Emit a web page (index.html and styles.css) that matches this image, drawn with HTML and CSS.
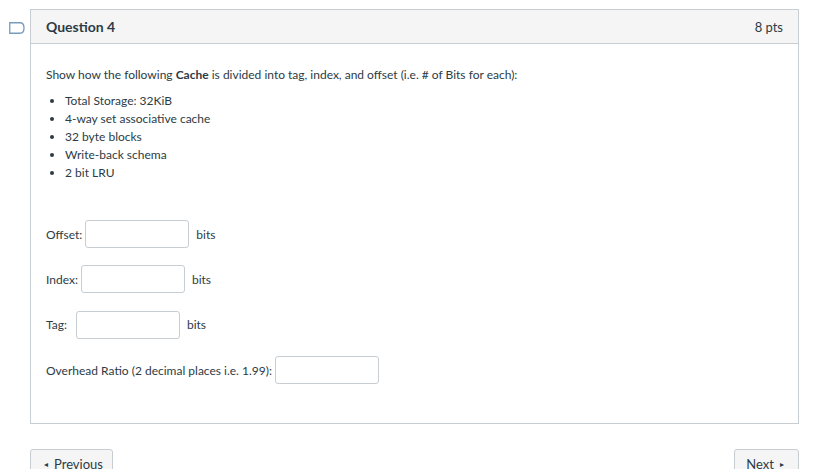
FILE: index.html
```html
<!DOCTYPE html>
<html>
<head>
<meta charset="utf-8">
<link rel="stylesheet" href="styles.css">
</head>
<body>
<div class="page">
  <div class="flag-col">
    <svg class="flag" width="16" height="12" viewBox="0 0 16 12"><path d="M0.75 0.75 H11 Q15 0.75 15 6 Q15 11.25 11 11.25 H0.75 Z" fill="none" stroke="#7a9bbd" stroke-width="1.3"/></svg>
  </div>
  <div class="main">
    <div class="card">
      <div class="card-head">
        <span class="q-title">Question 4</span>
        <span class="q-pts">8 pts</span>
      </div>
      <div class="card-body">
        <p class="intro">Show how the following <strong>Cache</strong> is divided into tag, index, and offset (i.e. # of Bits for each):</p>
        <ul class="specs">
          <li>Total Storage: 32KiB</li>
          <li>4-way set associative cache</li>
          <li>32 byte blocks</li>
          <li>Write-back schema</li>
          <li>2 bit LRU</li>
        </ul>
        <div class="field-row"><span>Offset:</span><input class="ans" type="text"><span class="unit">bits</span></div>
        <div class="field-row"><span>Index:</span><input class="ans" type="text"><span class="unit">bits</span></div>
        <div class="field-row"><span class="tag-label">Tag:</span><input class="ans" type="text"><span class="unit">bits</span></div>
        <div class="field-row"><span>Overhead Ratio (2 decimal places i.e. 1.99):</span><input class="ans" type="text"></div>
      </div>
    </div>
    <div class="nav">
      <button class="nav-btn prev"><span class="arrow">&#9666;</span>Previous</button>
      <button class="nav-btn next">Next<span class="arrow">&#9656;</span></button>
    </div>
  </div>
</div>
</body>
</html>
```
FILE: styles.css
```css
html, body {
  margin: 0;
  padding: 0;
  background: #ffffff;
}
body {
  font-family: Lato, "Liberation Sans", sans-serif;
  font-size: 12px;
  color: #2d3b45;
  overflow: hidden;
}
.page {
  display: flex;
  padding: 9px 0 0 9px;
}
.flag-col {
  width: 21px;
  padding-top: 13px;
}
.flag {
  display: block;
}
.main {
  width: 769px;
}
.card {
  border: 1px solid #c7cdd1;
  height: 415px;
  box-sizing: border-box;
}
.card-head {
  height: 33px;
  background: #f5f5f5;
  border-bottom: 1px solid #c7cdd1;
  display: flex;
  align-items: center;
  justify-content: space-between;
  padding: 0 15px;
}
.q-title {
  font-weight: 700;
  font-size: 14px;
  color: #2d3b45;
}
.q-pts {
  font-size: 13px;
}
.card-body {
  padding: 22px 15px 0 15px;
}
.intro {
  margin: 0;
  line-height: 18px;
}
.specs {
  margin: 8px 0 0 0;
  padding-left: 19px;
  line-height: 18px;
}
.field-row {
  display: flex;
  align-items: center;
  height: 28px;
  margin-top: 17.4px;
}
.specs + .field-row {
  margin-top: 38px;
}
.ans {
  box-sizing: border-box;
  width: 104px;
  height: 28px;
  margin: 0 0 0 3px;
  border: 1px solid #c7cdd1;
  border-radius: 3px;
  background: #fff;
}
.tag-label {
  margin-right: 6px;
}
.unit {
  margin-left: 7px;
}
.nav {
  display: flex;
  justify-content: space-between;
  margin-top: 25px;
}
.nav-btn {
  font-family: Lato, "Liberation Sans", sans-serif;
  font-size: 13px;
  color: #2d3b45;
  background: #f5f5f5;
  border: 1px solid #c7cdd1;
  border-radius: 3px;
  height: 36px;
  padding: 6px 11px 0 13px;
  display: flex;
  align-items: flex-start;
  gap: 6px;
}
.prev {
  padding-right: 9px;
}
.next {
  padding: 6px 14px 0 11px;
}
.arrow {
  font-size: 8px;
  line-height: 17px;
}
```
